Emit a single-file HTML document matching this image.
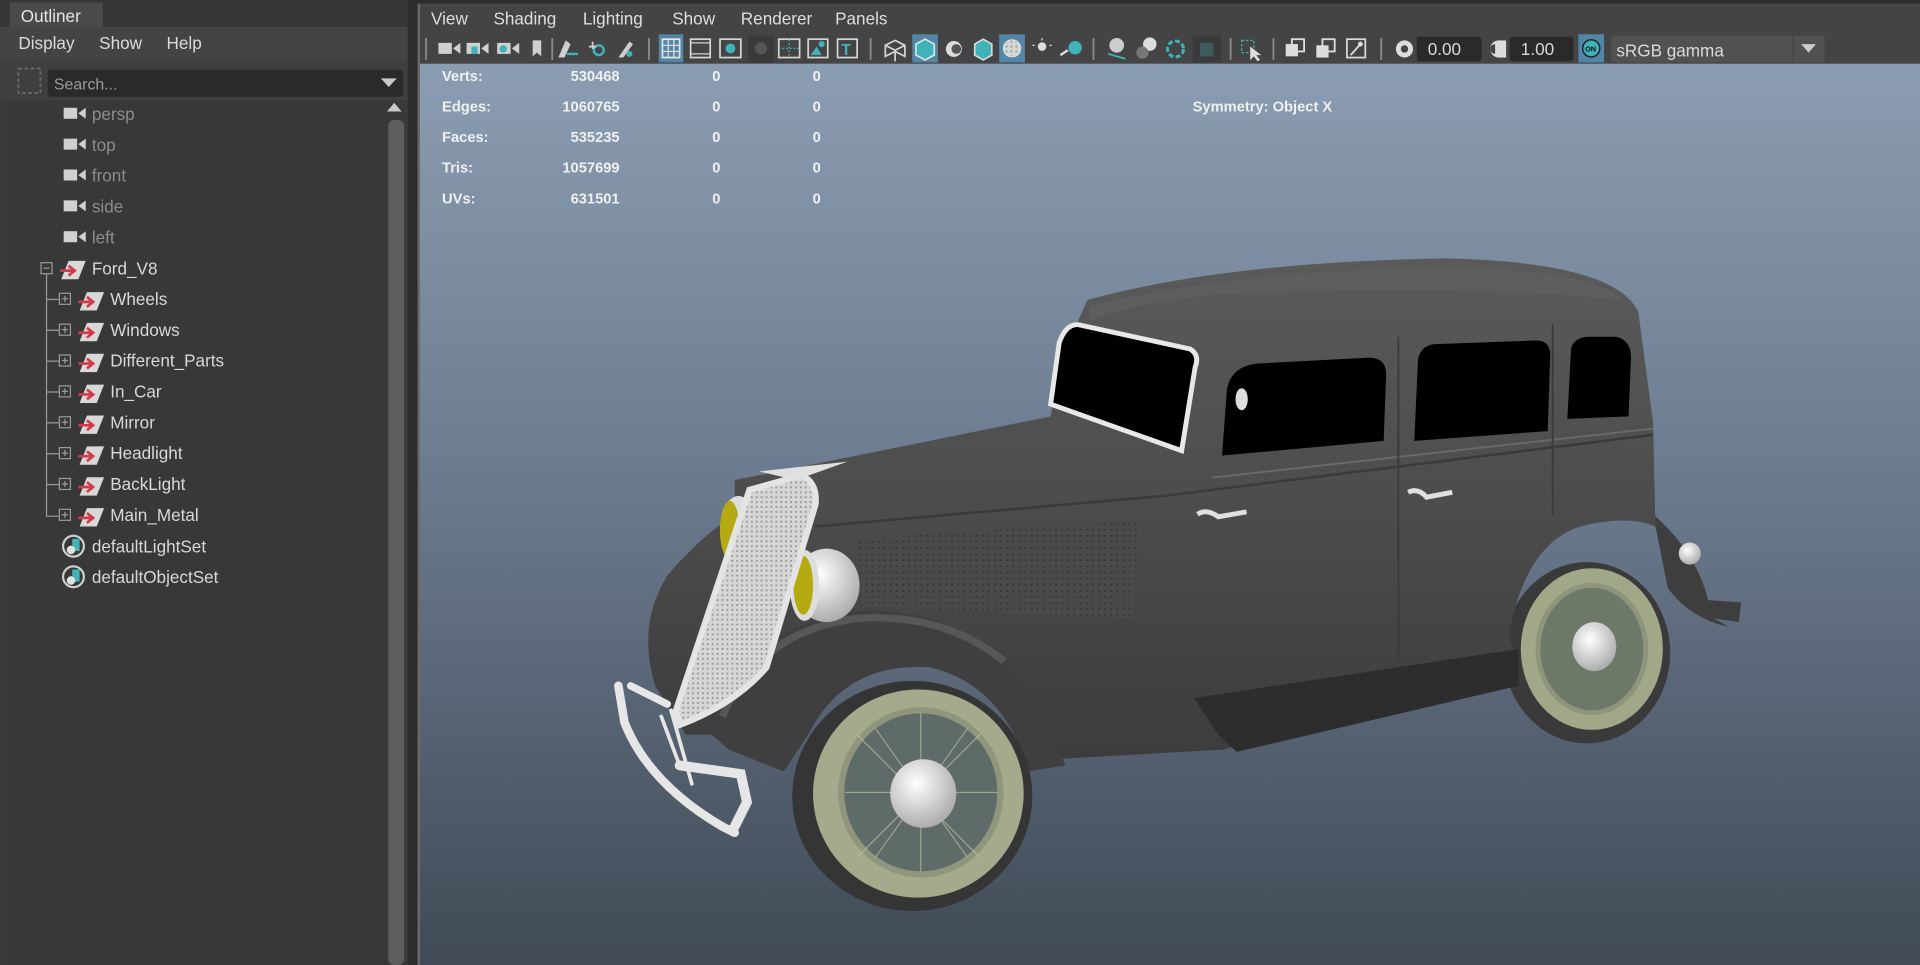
<!DOCTYPE html>
<html><head><meta charset="utf-8"><style>
html,body{margin:0;padding:0;width:1920px;height:965px;overflow:hidden;background:#3a3a3a}
svg{display:block}
text{font-family:"Liberation Sans",sans-serif}
</style></head><body>
<svg width="1920" height="965" viewBox="0 0 1568 788" preserveAspectRatio="none" xmlns="http://www.w3.org/2000/svg">
<defs>
<linearGradient id="vp" x1="0" y1="0" x2="0" y2="1">
<stop offset="0" stop-color="#8b9db2"/><stop offset="0.45" stop-color="#6c7c90"/><stop offset="1" stop-color="#414a56"/>
</linearGradient>
<linearGradient id="body" x1="0" y1="0" x2="0" y2="1">
<stop offset="0" stop-color="#5a5a5a"/><stop offset="0.5" stop-color="#4c4c4c"/><stop offset="1" stop-color="#3c3c3c"/>
</linearGradient>
<radialGradient id="hub" cx="0.4" cy="0.35" r="0.7"><stop offset="0" stop-color="#ffffff"/><stop offset="1" stop-color="#a8a8a8"/></radialGradient>
<pattern id="mesh" width="4" height="4" patternUnits="userSpaceOnUse"><rect width="4" height="4" fill="#d6d6d6"/><circle cx="2" cy="2" r="0.9" fill="#9a9a9a"/></pattern>
<pattern id="mesh2" width="5" height="5" patternUnits="userSpaceOnUse"><rect width="5" height="5" fill="#4a4a4a"/><circle cx="2.5" cy="2.5" r="0.8" fill="#333"/></pattern>
</defs>
<!-- outliner panel -->
<rect x="0" y="0" width="341" height="788" fill="#3b3b3b"/>
<rect x="0" y="0" width="333" height="22" fill="#363636"/>
<rect x="8" y="2" width="76" height="22" fill="#4a4a4a"/>
<text x="17" y="18" font-size="14" fill="#e6e6e6">Outliner</text>
<rect x="0" y="22" width="333" height="26" fill="#444"/>
<text x="15" y="40" font-size="14" fill="#dcdcdc">Display</text>
<text x="81" y="40" font-size="14" fill="#dcdcdc">Show</text>
<text x="136" y="40" font-size="14" fill="#dcdcdc">Help</text>
<rect x="0" y="48" width="333" height="34" fill="#3f3f3f"/>
<rect x="15" y="56" width="18" height="20" fill="none" stroke="#6a6a6a" stroke-width="1.5" stroke-dasharray="3 2"/>
<rect x="39" y="57" width="290" height="22" rx="2" fill="#2a2a2a"/>
<text x="44" y="73" font-size="13" fill="#9a9a9a">Search...</text>
<path d="M311 64 L324 64 L317.5 71 Z" fill="#c8c8c8"/>
<rect x="8" y="82" width="322" height="706" fill="#383838"/>
<path d="M316 91 L328 91 L322 84 Z" fill="#c8c8c8"/>
<rect x="317" y="98" width="13" height="690" rx="5" fill="#5e5e5e"/>
<rect x="333" y="0" width="8" height="788" fill="#2c2c2c"/>
<!-- cameras -->
<g fill="#8c8c8c" font-size="14">
<g><rect x="52" y="88" width="11" height="9" fill="#d0d0d0"/><path d="M64 92.5 L70 88 L70 97 Z" fill="#d0d0d0"/><text x="75" y="98">persp</text></g>
<g transform="translate(0,25.2)"><rect x="52" y="88" width="11" height="9" fill="#d0d0d0"/><path d="M64 92.5 L70 88 L70 97 Z" fill="#d0d0d0"/><text x="75" y="98">top</text></g>
<g transform="translate(0,50.4)"><rect x="52" y="88" width="11" height="9" fill="#d0d0d0"/><path d="M64 92.5 L70 88 L70 97 Z" fill="#d0d0d0"/><text x="75" y="98">front</text></g>
<g transform="translate(0,75.6)"><rect x="52" y="88" width="11" height="9" fill="#d0d0d0"/><path d="M64 92.5 L70 88 L70 97 Z" fill="#d0d0d0"/><text x="75" y="98">side</text></g>
<g transform="translate(0,100.8)"><rect x="52" y="88" width="11" height="9" fill="#d0d0d0"/><path d="M64 92.5 L70 88 L70 97 Z" fill="#d0d0d0"/><text x="75" y="98">left</text></g>
</g>
<!-- tree -->
<g stroke="#9a9a9a" stroke-width="1" fill="none">
<rect x="33.5" y="214.5" width="9" height="9"/><path d="M35.5 219 H40.5"/>
<path d="M38 224 V421.5 H48"/>
</g>
<g fill="#d8d8d8" font-size="14">
<text x="75" y="224">Ford_V8</text>
</g>
<g id="xf"><path d="M56 213 L70 213 L64 228 L50 228 Z" fill="#d8d8d8"/><path d="M49 221 L60 221 M56 217 L61 221 L56 225" stroke="#d23a4a" stroke-width="2.2" fill="none"/></g>
<g font-size="14" fill="#d8d8d8">
<g transform="translate(0,0)"><path d="M38 244.5 H49" stroke="#9a9a9a"/><rect x="48.5" y="239.5" width="9" height="9" fill="none" stroke="#9a9a9a"/><path d="M50.5 244 H55.5 M53 241.5 V246.5" stroke="#9a9a9a"/><use href="#xf" transform="translate(15,25.5)"/><text x="90" y="249">Wheels</text></g>
<g transform="translate(0,25.2)"><path d="M38 244.5 H49" stroke="#9a9a9a"/><rect x="48.5" y="239.5" width="9" height="9" fill="none" stroke="#9a9a9a"/><path d="M50.5 244 H55.5 M53 241.5 V246.5" stroke="#9a9a9a"/><use href="#xf" transform="translate(15,25.5)"/><text x="90" y="249">Windows</text></g>
<g transform="translate(0,50.4)"><path d="M38 244.5 H49" stroke="#9a9a9a"/><rect x="48.5" y="239.5" width="9" height="9" fill="none" stroke="#9a9a9a"/><path d="M50.5 244 H55.5 M53 241.5 V246.5" stroke="#9a9a9a"/><use href="#xf" transform="translate(15,25.5)"/><text x="90" y="249">Different_Parts</text></g>
<g transform="translate(0,75.6)"><path d="M38 244.5 H49" stroke="#9a9a9a"/><rect x="48.5" y="239.5" width="9" height="9" fill="none" stroke="#9a9a9a"/><path d="M50.5 244 H55.5 M53 241.5 V246.5" stroke="#9a9a9a"/><use href="#xf" transform="translate(15,25.5)"/><text x="90" y="249">In_Car</text></g>
<g transform="translate(0,100.8)"><path d="M38 244.5 H49" stroke="#9a9a9a"/><rect x="48.5" y="239.5" width="9" height="9" fill="none" stroke="#9a9a9a"/><path d="M50.5 244 H55.5 M53 241.5 V246.5" stroke="#9a9a9a"/><use href="#xf" transform="translate(15,25.5)"/><text x="90" y="249">Mirror</text></g>
<g transform="translate(0,126)"><path d="M38 244.5 H49" stroke="#9a9a9a"/><rect x="48.5" y="239.5" width="9" height="9" fill="none" stroke="#9a9a9a"/><path d="M50.5 244 H55.5 M53 241.5 V246.5" stroke="#9a9a9a"/><use href="#xf" transform="translate(15,25.5)"/><text x="90" y="249">Headlight</text></g>
<g transform="translate(0,151.2)"><path d="M38 244.5 H49" stroke="#9a9a9a"/><rect x="48.5" y="239.5" width="9" height="9" fill="none" stroke="#9a9a9a"/><path d="M50.5 244 H55.5 M53 241.5 V246.5" stroke="#9a9a9a"/><use href="#xf" transform="translate(15,25.5)"/><text x="90" y="249">BackLight</text></g>
<g transform="translate(0,176.4)"><rect x="48.5" y="239.5" width="9" height="9" fill="none" stroke="#9a9a9a"/><path d="M50.5 244 H55.5 M53 241.5 V246.5" stroke="#9a9a9a"/><use href="#xf" transform="translate(15,25.5)"/><text x="90" y="249">Main_Metal</text></g>
</g>
<g font-size="14" fill="#d8d8d8">
<circle cx="60" cy="446" r="8.5" fill="none" stroke="#cfcfcf" stroke-width="1.8"/><rect x="59" y="440" width="6" height="10" fill="#3fb3b8"/><circle cx="58" cy="449" r="3.5" fill="#e0e0e0"/>
<text x="75" y="451">defaultLightSet</text>
<circle cx="60" cy="471" r="8.5" fill="none" stroke="#cfcfcf" stroke-width="1.8"/><rect x="59" y="465" width="6" height="10" fill="#3fb3b8"/><circle cx="58" cy="474" r="3.5" fill="#e0e0e0"/>
<text x="75" y="476">defaultObjectSet</text>
</g>
<!-- viewport panel -->
<rect x="341" y="0" width="1227" height="788" fill="#444"/>
<rect x="341" y="0" width="1227" height="3" fill="#2e2e2e"/>
<rect x="341" y="3" width="2" height="785" fill="#6a6a6a"/>
<g font-size="14" fill="#dedede">
<text x="352" y="20">View</text><text x="403" y="20">Shading</text><text x="476" y="20">Lighting</text><text x="549" y="20">Show</text><text x="605" y="20">Renderer</text><text x="682" y="20">Panels</text>
</g>
<!-- toolbar -->
<g stroke="#8a8a8a" stroke-width="1.5">
<path d="M348 31 V49 M451 31 V49 M530 31 V49 M711 31 V49 M893 31 V49 M1005 31 V49 M1040 31 V49 M1128 31 V49"/>
</g>
<g fill="#d0d0d0">
<rect x="358" y="35" width="11" height="9"/><path d="M370 39.5 L376 35 L376 44 Z"/>
<rect x="381" y="35" width="11" height="9"/><rect x="385" y="38" width="5" height="6" fill="#3fb3b8"/><path d="M393 39.5 L399 35 L399 44 Z"/>
<rect x="406" y="35" width="11" height="9"/><circle cx="411" cy="40" r="3" fill="#3fb3b8"/><path d="M418 39.5 L424 35 L424 44 Z"/>
<path d="M435 33 H442 V46 L438.5 43 L435 46 Z"/>
<path d="M456 47 L462 33 L466 36 L461 47 Z"/><path d="M463 44 H472" stroke="#3fb3b8" stroke-width="2"/>
<circle cx="489" cy="41" r="4" fill="none" stroke="#3fb3b8" stroke-width="2"/><path d="M481 38 H487 M484 34 V40" stroke="#ccc" stroke-width="1.5"/>
<path d="M505 47 L514 34 L517 36 L509 47 Z"/><circle cx="514" cy="44" r="2.5" fill="#3fb3b8"/>
</g>
<rect x="538" y="28" width="20" height="23" fill="#5285a6"/>
<rect x="541" y="32" width="14" height="15" fill="none" stroke="#e5e5e5" stroke-width="1.4"/><path d="M541 37 H555 M541 42 H555 M545.7 32 V47 M550.3 32 V47" stroke="#e5e5e5" stroke-width="1"/>
<rect x="564" y="32" width="16" height="15" fill="none" stroke="#d5d5d5" stroke-width="1.4"/><path d="M564 35 H580 M564 44 H580" stroke="#d5d5d5"/>
<rect x="588" y="32" width="17" height="15" fill="none" stroke="#d5d5d5" stroke-width="1.4"/><circle cx="596.5" cy="39.5" r="4" fill="#3fb3b8"/>
<rect x="611" y="29" width="21" height="22" fill="#3a3a3a"/><circle cx="621.5" cy="39.5" r="5" fill="#555"/>
<rect x="636" y="32" width="17" height="15" fill="none" stroke="#d5d5d5" stroke-width="1.4"/><path d="M644.5 32 V47 M636 39.5 H653" stroke="#3fb3b8" stroke-dasharray="1.5 1.5"/>
<rect x="660" y="32" width="16" height="15" fill="none" stroke="#d5d5d5" stroke-width="1.4"/><path d="M662 45 L667 38 L671 45 Z" fill="#3fb3b8"/><circle cx="671" cy="36" r="2.5" fill="#3fb3b8"/>
<rect x="684" y="32" width="16" height="15" fill="none" stroke="#d5d5d5" stroke-width="1.4"/><text x="687" y="45" font-size="13" font-family="Liberation Serif" fill="#3fb3b8" font-weight="bold">T</text>
<g fill="none" stroke="#d5d5d5" stroke-width="1.4">
<path d="M731 33 L739 37 V46 L731 42 L723 46 V37 Z M723 37 L731 41 L739 37 M731 41 V50"/>
</g>
<rect x="745" y="28" width="21" height="23" fill="#5285a6"/>
<path d="M755.5 32 L763 36 V45 L755.5 49 L748 45 V36 Z" fill="#3fb3b8" stroke="#e5e5e5" stroke-width="1.3"/>
<circle cx="779" cy="40" r="6.5" fill="#ddd"/><circle cx="781" cy="40" r="4" fill="#555"/>
<path d="M803 32 L810 36 V45 L803 49 L796 45 V36 Z" fill="#3fb3b8" stroke="#ddd" stroke-width="1.3"/>
<rect x="816" y="28" width="21" height="23" fill="#5285a6"/>
<circle cx="826.5" cy="39.5" r="7" fill="url(#mesh)" stroke="#ddd"/>
<circle cx="851" cy="38" r="3.5" fill="#ddd"/><path d="M851 31 V33 M845 37 H843 M857 37 H859" stroke="#ddd"/>
<circle cx="878" cy="39" r="5.5" fill="#3fb3b8"/><path d="M866 45 L872 41" stroke="#ddd" stroke-width="2"/>
<circle cx="912" cy="37" r="6" fill="#ccc"/><path d="M905 44 L919 48" stroke="#3fb3b8" stroke-width="1.5"/>
<circle cx="939" cy="36" r="5.5" fill="#ddd"/><circle cx="933" cy="43" r="5" fill="#777"/>
<circle cx="960" cy="40" r="6.5" fill="none" stroke="#3fb3b8" stroke-width="2.5" stroke-dasharray="4 2"/>
<rect x="974" y="29" width="23" height="22" fill="#3a3a3a"/><rect x="980" y="35" width="11" height="11" fill="#3e5a5e"/>
<rect x="1014" y="33" width="10" height="10" fill="none" stroke="#3fb3b8" stroke-dasharray="2 1.5"/><path d="M1021 38 L1021 49 L1024 46 L1027 50 L1029 49 L1026 45 L1030 45 Z" fill="#ddd"/>
<rect x="1050" y="36" width="10" height="10" fill="#ddd"/><rect x="1055" y="32" width="10" height="10" fill="none" stroke="#ddd" stroke-width="1.5"/>
<rect x="1075" y="37" width="10" height="10" fill="#ddd"/><rect x="1080" y="32" width="10" height="10" fill="none" stroke="#ddd" stroke-width="1.5"/>
<rect x="1100" y="32" width="15" height="15" fill="none" stroke="#ddd" stroke-width="1.4"/><path d="M1103 45 L1112 35" stroke="#ddd" stroke-width="1.5"/><circle cx="1111" cy="36" r="2" fill="#ddd"/>
<circle cx="1147" cy="40" r="7" fill="#ddd"/><circle cx="1147" cy="40" r="3" fill="#444"/>
<rect x="1157" y="30" width="53" height="20" rx="2" fill="#2a2a2a"/><text x="1166" y="45" font-size="14" fill="#d8d8d8">0.00</text>
<path d="M1224 33 A7 7 0 0 0 1224 47 Z" fill="#ddd"/><rect x="1223" y="33" width="7" height="14" fill="#ddd"/><path d="M1221 36 A4 4 0 0 0 1221 44 Z" fill="#444"/>
<rect x="1233" y="30" width="52" height="20" rx="2" fill="#2a2a2a"/><text x="1242" y="45" font-size="14" fill="#d8d8d8">1.00</text>
<rect x="1289" y="28" width="21" height="23" fill="#5285a6"/><circle cx="1299.5" cy="39.5" r="7" fill="#3fb3b8" stroke="#222" stroke-width="1.2"/><text x="1294.5" y="42" font-size="6" fill="#111" font-weight="bold">ON</text>
<rect x="1316" y="29" width="148" height="22" fill="#515151"/><text x="1320" y="46" font-size="14" fill="#dadada">sRGB gamma</text>
<rect x="1465" y="29" width="25" height="22" fill="#515151"/><path d="M1471 36 L1483 36 L1477 43 Z" fill="#ccc"/>
<!-- viewport -->
<rect x="343" y="52" width="1225" height="736" fill="url(#vp)"/>
<g font-size="12" font-weight="bold" fill="#f0f0f0">
<text x="361" y="66">Verts:</text><text x="361" y="91">Edges:</text><text x="361" y="116">Faces:</text><text x="361" y="141">Tris:</text><text x="361" y="166">UVs:</text>
<g text-anchor="end"><text x="506" y="66">530468</text><text x="506" y="91">1060765</text><text x="506" y="116">535235</text><text x="506" y="141">1057699</text><text x="506" y="166">631501</text></g>
<g text-anchor="middle"><text x="585" y="66">0</text><text x="585" y="91">0</text><text x="585" y="116">0</text><text x="585" y="141">0</text><text x="585" y="166">0</text>
<text x="667" y="66">0</text><text x="667" y="91">0</text><text x="667" y="116">0</text><text x="667" y="141">0</text><text x="667" y="166">0</text></g>
<text x="974" y="91">Symmetry: Object X</text>
</g>
<!-- car -->
<!-- rear wheel -->
<ellipse cx="1296" cy="533" rx="68" ry="74" fill="#3a3a3a"/>
<ellipse cx="1300" cy="530" rx="58" ry="66" fill="#a1a888"/>
<ellipse cx="1300" cy="530" rx="44" ry="52" fill="#6c7868" stroke="#8e957a" stroke-width="4"/>
<ellipse cx="1302" cy="528" rx="18" ry="20" fill="url(#hub)"/>
<!-- rear fender tail -->
<path d="M1350 420 Q1385 450 1395 490 L1422 492 L1420 508 L1400 505 L1412 512 Q1380 505 1362 480 Z" fill="#3e3e3e"/>
<circle cx="1380" cy="452" r="9" fill="url(#hub)"/>
<!-- main body -->
<path d="M600 392 L700 372 L858 340 L868 290 L888 245 Q1000 214 1180 211 Q1320 214 1338 255 L1350 345 L1352 430 Q1330 420 1290 430 Q1245 445 1232 520 L1240 540 L1000 612 L860 620 Q840 560 800 530 Q740 500 680 510 Q620 530 600 600 L560 600 L535 560 Q520 510 545 470 Q570 440 600 420 Z" fill="url(#body)"/>
<!-- roof highlight -->
<path d="M890 250 Q1000 222 1180 218 Q1300 220 1325 245 Q1200 232 1000 240 Q930 246 890 262 Z" fill="#5e5e5e"/>
<!-- lower sill -->
<path d="M975 570 L1240 530 L1240 560 L1010 614 L995 600 Z" fill="#2d2d2d"/>
<!-- side panel line -->
<path d="M665 430 L950 405 L1350 355" stroke="#3a3a3a" stroke-width="2" fill="none"/>
<path d="M990 390 L1350 350" stroke="#6a6a6a" stroke-width="1.5" fill="none"/>
<path d="M1142 275 L1142 540 M1268 265 L1268 420" stroke="#3a3a3a" stroke-width="1.5" fill="none"/>
<!-- hood louvers -->
<path d="M700 440 L930 425 L925 505 L705 495 Z" fill="url(#mesh2)"/>
<!-- windows -->
<path d="M865 280 Q870 265 880 265 L972 285 Q980 290 976 300 L965 368 L858 330 Z" fill="#000" stroke="#e8e8e8" stroke-width="4"/>
<path d="M1002 318 Q1005 300 1025 297 L1118 292 Q1132 292 1132 306 L1130 360 L998 372 Z" fill="#000"/>
<path d="M1158 294 Q1160 282 1172 281 L1255 278 Q1266 278 1266 290 L1264 352 L1155 360 Z" fill="#000"/>
<path d="M1283 285 Q1285 276 1296 275 L1320 275 Q1332 278 1332 292 L1330 340 L1280 342 Z" fill="#000"/>
<ellipse cx="1014" cy="326" rx="5" ry="9" fill="#ddd"/>
<!-- door handles -->
<path d="M978 420 Q985 415 995 422 L1018 418" stroke="#e0e0e0" stroke-width="4" fill="none"/>
<path d="M1150 402 Q1158 398 1165 406 L1186 402" stroke="#e0e0e0" stroke-width="4" fill="none"/>
<!-- front fender -->
<path d="M570 590 Q600 520 690 500 Q780 490 840 560 Q860 600 870 625 L840 630 Q820 560 760 545 Q690 540 660 600 L640 630 L595 612 Z" fill="#3f3f3f"/>
<path d="M590 585 Q620 515 700 505 Q770 500 820 540" stroke="#575757" stroke-width="6" fill="none"/>
<!-- front wheel -->
<ellipse cx="745" cy="650" rx="98" ry="94" fill="#353535"/>
<ellipse cx="750" cy="648" rx="86" ry="85" fill="#a4aa8b"/>
<ellipse cx="752" cy="647" rx="65" ry="67" fill="#5f6b68" stroke="#8f967c" stroke-width="5"/>
<g stroke="#c8ccb0" stroke-width="0.8" opacity="0.7"><path d="M700 600 L800 700 M700 700 L800 600 M752 582 L752 712 M690 647 L815 647 M715 595 L790 700 M790 595 L715 700"/></g>
<ellipse cx="754" cy="648" rx="27" ry="28" fill="url(#hub)"/>
<!-- headlight housing -->
<ellipse cx="675" cy="478" rx="27" ry="30" fill="url(#hub)"/>
<ellipse cx="657" cy="478" rx="12" ry="29" fill="#ddd"/>
<ellipse cx="656" cy="478" rx="8" ry="24" fill="#b5aa12"/>
<ellipse cx="603" cy="433" rx="15" ry="28" fill="#ddd"/>
<ellipse cx="596" cy="433" rx="8" ry="24" fill="#b5aa12"/>
<!-- grille -->
<path d="M612 400 L655 388 Q668 395 666 412 L626 545 Q600 575 555 592 L552 580 Z" fill="url(#mesh)" stroke="#e4e4e4" stroke-width="5"/>
<path d="M620 385 L692 377 L650 392 Z" fill="#e0e0e0"/>
<!-- bumper -->
<g fill="none" stroke="#e6e6e6" stroke-linecap="round">
<path d="M505 560 L510 590 Q530 640 590 675 L600 680" stroke-width="7"/>
<path d="M515 560 L545 575" stroke-width="6"/>
<path d="M555 625 L605 632 L610 655 L600 675" stroke-width="8"/>
<path d="M540 585 L555 625 M548 580 L565 640" stroke-width="3"/>
</g>
</svg>
</body></html>
